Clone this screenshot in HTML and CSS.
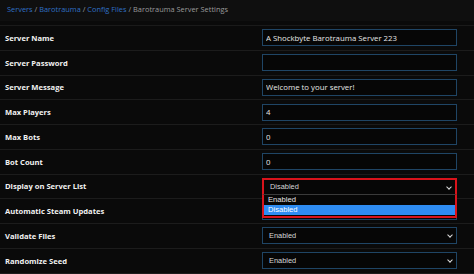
FILE: index.html
```html
<!DOCTYPE html>
<html lang="en">
<head>
  <meta charset="UTF-8">
  <meta name="viewport" content="width=device-width, initial-scale=1.0">
  <title>Barotrauma Server Settings</title>
  <link rel="stylesheet" href="styles.css">
</head>
<body>
  <div class="crumbs">
    <a href="#">Servers</a> / <a href="#">Barotrauma</a> / <a href="#">Config Files</a> / <span>Barotrauma Server Settings</span>
  </div>

  <div class="settings">
    <div class="row">
      <div class="label">Server Name</div>
      <div class="field"><input type="text" value="A Shockbyte Barotrauma Server 223"></div>
    </div>
    <div class="row">
      <div class="label">Server Password</div>
      <div class="field"><input type="text" value=""></div>
    </div>
    <div class="row">
      <div class="label">Server Message</div>
      <div class="field"><input type="text" value="Welcome to your server!"></div>
    </div>
    <div class="row">
      <div class="label">Max Players</div>
      <div class="field"><input type="text" value="4"></div>
    </div>
    <div class="row">
      <div class="label">Max Bots</div>
      <div class="field"><input type="text" value="0"></div>
    </div>
    <div class="row">
      <div class="label">Bot Count</div>
      <div class="field"><input type="text" value="0"></div>
    </div>
    <div class="row">
      <div class="label">Display on Server List</div>
      <div class="field open">
        <div class="select active">Disabled <span class="caret"></span></div>
        <ul class="options">
          <li>Enabled</li>
          <li class="picked">Disabled</li>
        </ul>
      </div>
    </div>
    <div class="row">
      <div class="label">Automatic Steam Updates</div>
      <!-- covered by the open dropdown above -->
      <div class="field"><div class="select"><span class="caret"></span></div></div>
    </div>
    <div class="row">
      <div class="label">Validate Files</div>
      <div class="field"><div class="select">Enabled <span class="caret"></span></div></div>
    </div>
    <div class="row">
      <div class="label">Randomize Seed</div>
      <div class="field"><div class="select">Enabled <span class="caret"></span></div></div>
    </div>
  </div>
</body>
</html>
```

FILE: styles.css
```css
body {
  margin: 0;
  background-color: #0c0c0c;
  font-family: 'Open Sans', sans-serif;
  color: #e8e8e8;
  overflow: hidden;
}
.crumbs {
  height: 19px;
  padding: 2px 7px 0;
  font-size: 7.4px;
  line-height: 14px;
  color: #9a9a9a;
  background-color: #0f0f0f;
  border-bottom: 4px solid #0a0a0a;
}
.crumbs a {
  color: #2f6fc4;
  text-decoration: none;
}
.settings {
  border-top: 1px solid #1a1a1a;
}
.row {
  display: flex;
  align-items: center;
  height: 23.75px;
  border-bottom: 1px solid #1c1c1c;
  background-color: #0a0a0a;
}
.label {
  width: 257px;
  padding-left: 5px;
  font-size: 7.6px;
  font-weight: 700;
  color: #f2f2f2;
}
.field {
  position: relative;
  width: 195px;
}
input[type="text"],
.select {
  box-sizing: border-box;
  display: block;
  width: 100%;
  height: 17px;
  padding: 0 3px;
  background-color: #060606;
  border: 1px solid #1f4565;
  color: #e6e6e6;
  font-family: 'Open Sans', sans-serif;
  font-size: 7.8px;
  line-height: 15px;
}
.select {
  position: relative;
  padding-left: 6px;
  color: #d8d8d8;
  font-family: 'Liberation Sans', sans-serif;
  font-size: 7.4px;
}
.caret {
  position: absolute;
  right: 4px;
  top: 5px;
  width: 3px;
  height: 3px;
  border-right: 1.5px solid #ddd;
  border-bottom: 1.5px solid #ddd;
  transform: rotate(45deg);
}
.open .select.active {
  border: 2px solid #d8131b;
  border-bottom: 1px solid #3a3a3a;
  line-height: 14px;
}
.options {
  position: absolute;
  left: 0;
  right: 0;
  top: 17px;
  z-index: 2;
  margin: 0;
  padding: 0 0 1px;
  list-style: none;
  background-color: #060606;
  border: 2px solid #d8131b;
  border-top: none;
  font-family: 'Liberation Sans', sans-serif;
  font-size: 7.6px;
  line-height: 10px;
  color: #e6e6e6;
}
.options li {
  padding-left: 4px;
}
.options li.picked {
  background-color: #2e8cf2;
  color: #fff;
}
```
